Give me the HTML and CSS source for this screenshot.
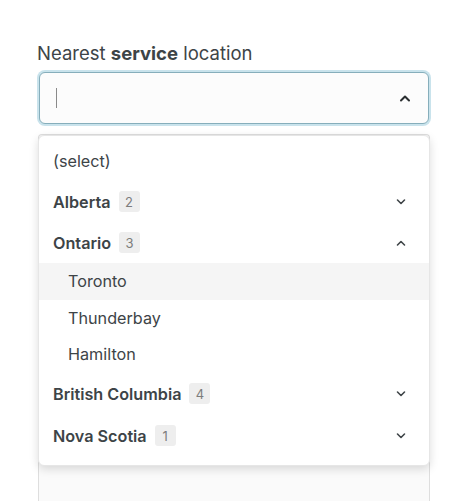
FILE: index.html
```html
<!DOCTYPE html>
<html lang="en">
<head>
<meta charset="utf-8">
<title>Nearest service location</title>
<link rel="stylesheet" href="styles.css">
</head>
<body>
<div class="page">
  <label class="label">Nearest <strong>service</strong> location</label>
  <div class="field">
    <div class="combo">
      <span class="caret"></span>
      <svg class="chev-main" width="12" height="8" viewBox="0 0 12 8"><path d="M2 6.5 L6 2.5 L10 6.5" fill="none" stroke="#2b2f31" stroke-width="2" stroke-linecap="round" stroke-linejoin="round"/></svg>
    </div>
    <div class="under"></div>
    <ul class="menu">
      <li class="opt">(select)</li>
      <li class="grp"><span class="name">Alberta</span><span class="badge">2</span><svg class="chev" width="12" height="8" viewBox="0 0 12 8"><path d="M2.5 2 L6 5.5 L9.5 2" fill="none" stroke="#3f4548" stroke-width="1.6" stroke-linecap="round" stroke-linejoin="round"/></svg></li>
      <li class="grp"><span class="name">Ontario</span><span class="badge">3</span><svg class="chev" width="12" height="8" viewBox="0 0 12 8"><path d="M2.5 6 L6 2.5 L9.5 6" fill="none" stroke="#3f4548" stroke-width="1.6" stroke-linecap="round" stroke-linejoin="round"/></svg></li>
      <li class="child active">Toronto</li>
      <li class="child">Thunderbay</li>
      <li class="child">Hamilton</li>
      <li class="grp tall"><span class="name">British Columbia</span><span class="badge">4</span><svg class="chev" width="12" height="8" viewBox="0 0 12 8"><path d="M2.5 2 L6 5.5 L9.5 2" fill="none" stroke="#3f4548" stroke-width="1.6" stroke-linecap="round" stroke-linejoin="round"/></svg></li>
      <li class="grp tall"><span class="name">Nova Scotia</span><span class="badge">1</span><svg class="chev" width="12" height="8" viewBox="0 0 12 8"><path d="M2.5 2 L6 5.5 L9.5 2" fill="none" stroke="#3f4548" stroke-width="1.6" stroke-linecap="round" stroke-linejoin="round"/></svg></li>
    </ul>
  </div>
</div>
</body>
</html>
```
FILE: styles.css
```css
* { box-sizing: border-box; }
html, body { margin: 0; padding: 0; background: #ffffff; }
body {
  font-family: Inter, "Noto Sans", sans-serif;
  color: #3d4447;
  overflow: hidden;
  height: 503px;
}
.page {
  padding: 40px 44px 0 38px;
}
.label {
  display: block;
  font-size: 18.5px;
  line-height: 26px;
  margin-left: -1px;
  margin-bottom: 6px;
}
.label strong { font-weight: 700; }
.field {
  position: relative;
  width: 392px;
}
.combo {
  height: 52px;
  border: 1px solid #86aebb;
  box-shadow: 0 0 0 2px #c9e3ec;
  border-radius: 6px;
  background: #fcfcfc;
  display: flex;
  align-items: center;
  justify-content: space-between;
  padding: 0 17px 0 16px;
  margin: 1px;
}
.caret {
  width: 1px;
  height: 20px;
  background: #8a8a8a;
}
.chev-main { display: block; }
.under {
  margin-top: 10px;
  height: 367px;
  background: #fafafa;
  border: 1px solid #dedede;
  border-bottom: none;
  border-radius: 4px 4px 0 0;
}
.menu {
  position: absolute;
  top: 63px;
  left: 0;
  width: 392px;
  margin: 0;
  padding: 4px 0 8px;
  list-style: none;
  background: #ffffff;
  border: 1px solid #e6e6e6;
  border-radius: 6px;
  box-shadow: 0 3px 10px rgba(0, 0, 0, 0.14);
  font-size: 16.2px;
}
.opt, .grp {
  height: 41px;
  display: flex;
  align-items: center;
  padding: 0 22px 0 14px;
}
.grp.tall { height: 42px; }
.grp .name { font-weight: 600; }
.badge {
  margin-left: 8px;
  width: 21px;
  height: 21px;
  border-radius: 3px;
  background: #eeeeee;
  color: #7c7c7c;
  font-size: 13px;
  display: flex;
  align-items: center;
  justify-content: center;
}
.chev { margin-left: auto; display: block; }
.child {
  height: 36.5px;
  display: flex;
  align-items: center;
  padding-left: 29px;
}
.child:first-of-type { margin-top: 1px; }
.active { background: #f5f5f5; }
```
